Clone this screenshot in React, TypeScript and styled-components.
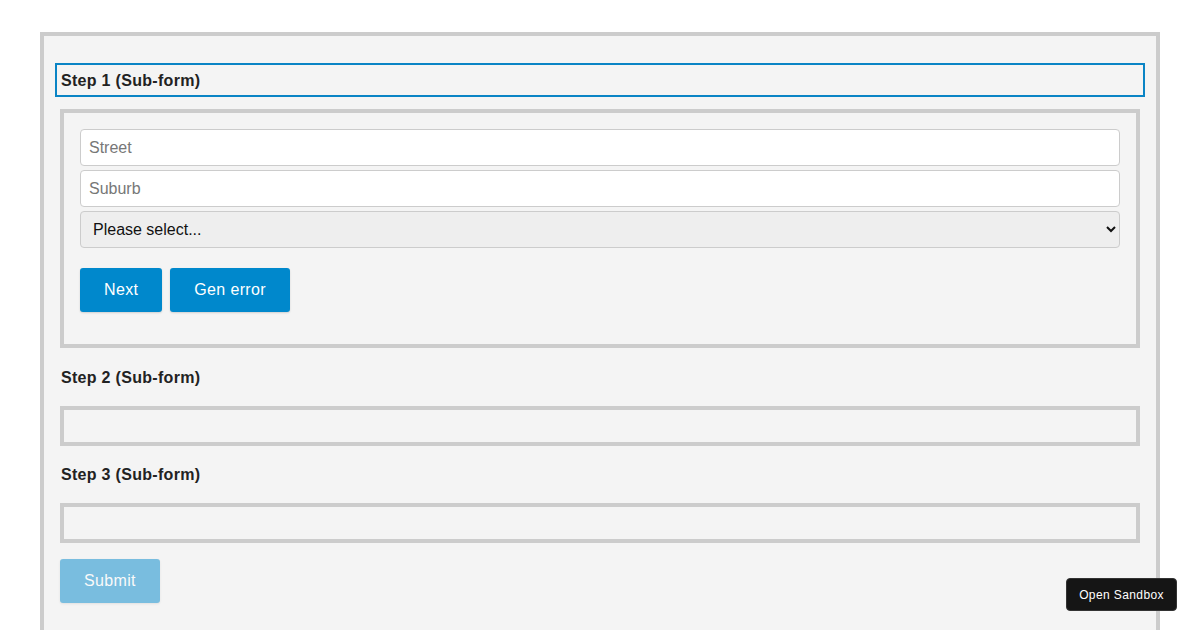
import React from "react";
import styled, { createGlobalStyle } from "styled-components";

const Global = createGlobalStyle`
  html, body { margin: 0; padding: 0; background: #fff; }
  body { font-family: "Liberation Sans", Arial, sans-serif; color: #222; }
  * { box-sizing: border-box; }
`;

const Page = styled.div`
  padding: 32px 40px 0;
`;

const Wizard = styled.form`
  border: 4px solid #cccccc;
  border-bottom: none;
  background: #f4f4f4;
  padding: 27px 16px 40px;
  display: flex;
  flex-direction: column;
`;

const StepHeader = styled.div<{ $active?: boolean }>`
  margin: 0 -5px;
  height: 34px;
  display: flex;
  align-items: center;
  padding: 2px 4px 0;
  border: 2px solid ${(p) => (p.$active ? "#0a84c5" : "transparent")};
  font-weight: bold;
  font-size: 16px;
  letter-spacing: 0.3px;
  color: #222;
`;

const SubForm = styled.fieldset`
  margin: 12px 0 11.5px;
  border: 4px solid #cccccc;
  padding: 16px;
  min-height: 40px;
  display: flex;
  flex-direction: column;
  gap: 4px;
  min-inline-size: auto;
`;

const TextInput = styled.input`
  height: 37px;
  border: 1px solid #cccccc;
  border-radius: 4px;
  background: #fff;
  padding: 0 8px;
  font-size: 16px;
  font-family: "Liberation Sans", Arial, sans-serif;
  color: #222;
  &::placeholder { color: #777; }
`;

const Select = styled.select`
  height: 37px;
  border: 1px solid #cccccc;
  border-radius: 4px;
  background: #eeeeee;
  padding: 0 8px;
  font-size: 16px;
  font-family: "Liberation Sans", Arial, sans-serif;
  color: #111;
`;

const ButtonRow = styled.div`
  display: flex;
  gap: 8px;
  margin: 16px 0 16px;
`;

const Button = styled.button<{ $disabled?: boolean }>`
  height: 44px;
  padding: 0 24px;
  border: none;
  border-radius: 3px;
  background: #0088cc;
  color: #fff;
  font-size: 16px;
  letter-spacing: 0.35px;
  font-family: "Liberation Sans", Arial, sans-serif;
  box-shadow: 0 1px 2px rgba(0, 0, 0, 0.15);
  opacity: ${(p) => (p.$disabled ? 0.5 : 1)};
  align-self: flex-start;
`;

const SubmitWrap = styled.div`
  margin-top: 4px;
`;

const Sandbox = styled.div`
  position: fixed;
  right: 23px;
  bottom: 19px;
  height: 33px;
  padding: 0 12px;
  display: flex;
  align-items: center;
  background: #151515;
  color: #fff;
  font-size: 12px;
  letter-spacing: 0.4px;
  border-radius: 4px;
  border: 1px solid #333;
  font-family: "Liberation Sans", Arial, sans-serif;
`;

export default function App() {
  return (
    <>
      <Global />
      <Page>
        <Wizard onSubmit={(e) => e.preventDefault()}>
          <StepHeader $active>Step 1 (Sub-form)</StepHeader>
          <SubForm>
            <TextInput placeholder="Street" />
            <TextInput placeholder="Suburb" />
            <Select defaultValue="">
              <option value="">Please select...</option>
            </Select>
            <ButtonRow>
              <Button type="button">Next</Button>
              <Button type="button">Gen error</Button>
            </ButtonRow>
          </SubForm>
          <StepHeader>Step 2 (Sub-form)</StepHeader>
          <SubForm />
          <StepHeader>Step 3 (Sub-form)</StepHeader>
          <SubForm />
          <SubmitWrap>
            <Button type="submit" $disabled disabled>
              Submit
            </Button>
          </SubmitWrap>
        </Wizard>
      </Page>
      <Sandbox>Open Sandbox</Sandbox>
    </>
  );
}
